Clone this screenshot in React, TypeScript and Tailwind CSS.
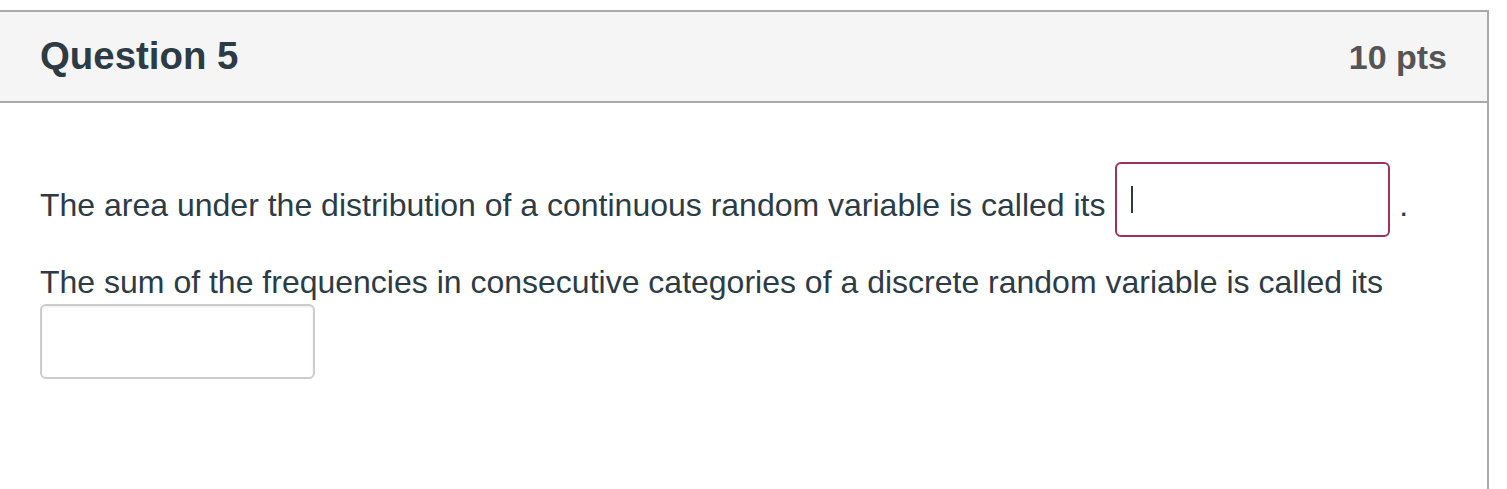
export default function App() {
  return (
    <div className="w-[1507px] h-[489px] bg-white overflow-hidden pt-[10px]" style={{ fontFamily: '"Liberation Sans", Arial, sans-serif' }}>
      <div className="w-[1489px] h-[479px] border-t-2 border-r-2 border-[#aaaaaa]">
        <div className="h-[91px] bg-[#f5f5f5] border-b-2 border-[#aaaaaa] flex items-center justify-between pl-10 pr-10">
          <h2 className="text-[38.4px] font-bold text-[#2d3b45] leading-none">Question 5</h2>
          <div className="text-[34px] font-bold text-[#555555] leading-none">10 pts</div>
        </div>
        <div className="px-10 pt-[53px] text-[32px] leading-[36px] text-[#2d3b45]">
          <p className="mb-[21px]">
            The area under the distribution of a continuous random variable is called its{' '}
            <span className="inline-block align-[-27px] my-[6px] ml-px w-[275px] h-[75px] border-2 border-[#9f3158] rounded-[6px] bg-white relative">
              <span className="absolute left-[14px] top-[22px] w-[2px] h-[27px] bg-[#2d3b45]" />
            </span>{' '}
            .
          </p>
          <p>
            The sum of the frequencies in consecutive categories of a discrete random variable is called its{' '}
            <span className="inline-block align-[-27px] mt-[4px] mb-[6px] w-[275px] h-[75px] border-2 border-[#cccccc] rounded-[6px] bg-white shadow-[inset_0_1px_2px_rgba(0,0,0,0.08)]" />
          </p>
        </div>
      </div>
    </div>
  );
}
